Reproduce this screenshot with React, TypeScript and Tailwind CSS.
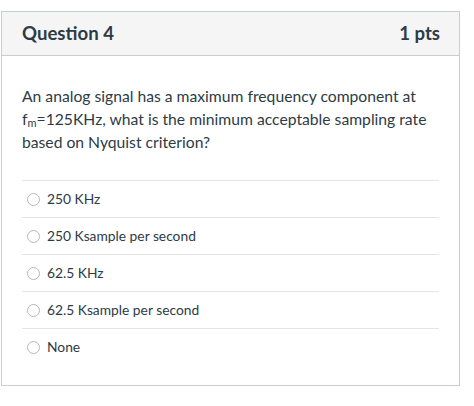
import React from "react";

const options = [
  "250 KHz",
  "250 Ksample per second",
  "62.5 KHz",
  "62.5 Ksample per second",
  "None",
];

export default function App() {
  return (
    <div
      className="w-[474px] h-[406px] bg-white pt-[11px] pl-[1px]"
      style={{ fontFamily: "Lato, 'Open Sans', sans-serif" }}
    >
      <div className="w-[459px] border border-[#c7cdd1] text-[#2d3b45]">
        <div className="h-[44px] bg-[#f5f5f5] border-b border-[#c7cdd1] flex items-center justify-between pl-[20px] pr-[19px]">
          <span className="text-[18.6px] font-bold">Question 4</span>
          <span className="text-[18.6px] font-bold">1 pts</span>
        </div>
        <div className="px-[20px] pt-[29px] pb-[20px]">
          <p className="text-[15.7px] leading-[23px]">
            An analog signal has a maximum frequency component at f
            <sub className="text-[11px] align-baseline relative top-[2px]">m</sub>
            =125KHz, what is the minimum acceptable sampling rate based on Nyquist criterion?
          </p>
          <div className="mt-[26px]">
            {options.map((o) => (
              <div
                key={o}
                className="h-[37px] border-t border-[#e3e5e7] flex items-center pl-[5px]"
              >
                <span className="w-[13px] h-[13px] rounded-full border border-[#b5b9bc] bg-white" />
                <span className="ml-[7px] text-[13.8px]">{o}</span>
              </div>
            ))}
          </div>
        </div>
      </div>
    </div>
  );
}
